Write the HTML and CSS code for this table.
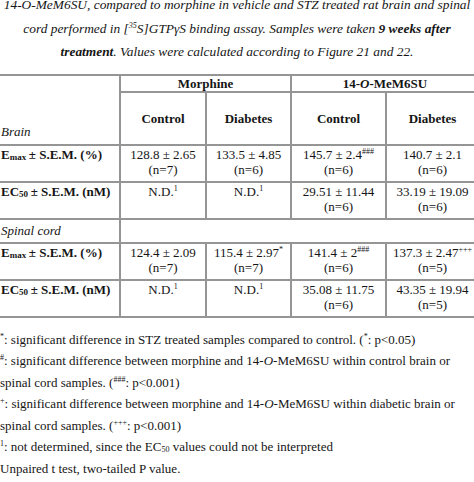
FILE: index.html
```html
<!DOCTYPE html>
<html>
<head>
<meta charset="utf-8">
<link rel="stylesheet" href="styles.css">
</head>
<body>
<p class="caption"><i>14-O-MeM6SU, compared to morphine in vehicle and STZ treated rat brain and spinal cord performed in [<sup>35</sup>S]GTP&gamma;S binding assay. Samples were taken <b>9 weeks after treatment</b>. Values were calculated according to Figure 21 and 22.</i></p>
<table class="data">
<colgroup>
<col class="c1"><col class="c2"><col class="c3"><col class="c4"><col class="c5">
</colgroup>
<tr class="h1">
<td class="region" rowspan="2"><i>Brain</i></td>
<th colspan="2">Morphine</th>
<th colspan="2">14-<i>O</i>-MeM6SU</th>
</tr>
<tr class="h2">
<th>Control</th><th>Diabetes</th><th>Control</th><th>Diabetes</th>
</tr>
<tr class="row">
<td class="lab">E<sub class="sm">max</sub>&thinsp;&plusmn; S.E.M. (%)</td>
<td>128.8 &plusmn; 2.65<br>(n=7)</td>
<td>133.5 &plusmn; 4.85<br>(n=6)</td>
<td>145.7 &plusmn; 2.4<sup>###</sup><br>(n=6)</td>
<td>140.7 &plusmn; 2.1<br>(n=6)</td>
</tr>
<tr class="row">
<td class="lab">EC<sub class="sm">50</sub>&thinsp;&plusmn; S.E.M. (nM)</td>
<td>N.D.<sup>1</sup></td>
<td>N.D.<sup>1</sup></td>
<td>29.51 &plusmn; 11.44<br>(n=6)</td>
<td>33.19 &plusmn; 19.09<br>(n=6)</td>
</tr>
<tr class="sec">
<td class="secname"><i>Spinal cord</i></td>
<td colspan="4"></td>
</tr>
<tr class="row">
<td class="lab">E<sub class="sm">max</sub>&thinsp;&plusmn; S.E.M. (%)</td>
<td>124.4 &plusmn; 2.09<br>(n=7)</td>
<td>115.4 &plusmn; 2.97<sup>*</sup><br>(n=7)</td>
<td>141.4 &plusmn; 2<sup>###</sup><br>(n=6)</td>
<td>137.3 &plusmn; 2.47<sup>+++</sup><br>(n=5)</td>
</tr>
<tr class="row">
<td class="lab">EC<sub class="sm">50</sub>&thinsp;&plusmn; S.E.M. (nM)</td>
<td>N.D.<sup>1</sup></td>
<td>N.D.<sup>1</sup></td>
<td>35.08 &plusmn; 11.75<br>(n=6)</td>
<td>43.35 &plusmn; 19.94<br>(n=5)</td>
</tr>
</table>
<div class="notes">
<p><sup>*</sup>: significant difference in STZ treated samples compared to control. (<sup>*</sup>: p&lt;0.05)</p>
<p><sup>#</sup>: significant difference between morphine and 14-<i>O</i>-MeM6SU within control brain or spinal cord samples. (<sup>###</sup>: p&lt;0.001)</p>
<p><sup>+</sup>: significant difference between morphine and 14-<i>O</i>-MeM6SU within diabetic brain or spinal cord samples. (<sup>+++</sup>: p&lt;0.001)</p>
<p><sup>1</sup>: not determined, since the EC<sub>50</sub> values could not be interpreted</p>
<p>Unpaired t test, two-tailed P value.</p>
</div>
</body>
</html>
```
FILE: styles.css
```css
html, body {
  margin: 0;
  padding: 0;
  background: #fff;
}
body {
  font-family: "Liberation Serif", "Times New Roman", serif;
  color: #151515;
  width: 474px;
  overflow: hidden;
}
sup {
  font-size: 8px;
  line-height: 0;
  vertical-align: 5px;
}
sub {
  font-size: 9px;
  line-height: 0;
  vertical-align: -1px;
}
.caption {
  margin: -7px 0 0 0;
  padding: 0;
  font-size: 13.4px;
  line-height: 23.5px;
  text-align: center;
}
.data {
  border-collapse: collapse;
  table-layout: fixed;
  width: 478px;
  margin-top: 10px;
  font-size: 13px;
  line-height: 15px;
}
.c1 { width: 120px; }
.c2 { width: 86px; }
.c3 { width: 85px; }
.c4 { width: 95px; }
.c5 { width: 92px; }
.data td, .data th {
  border: 2px solid #959595;
  padding: 0;
  text-align: center;
  vertical-align: top;
}
.data tr > :first-child {
  border-left: none;
}
.data tr > :last-child {
  border-right: none;
}
.data th {
  font-weight: bold;
  vertical-align: middle;
}
.h1 th { height: 14px; }
.h2 th { height: 51px; }
.data td.region {
  text-align: left;
  vertical-align: bottom;
  padding: 0 0 5px 1px;
  border-left: none;
}
.row td {
  height: 34px;
  padding-top: 1px;
}
.data td.lab {
  text-align: left;
  font-weight: bold;
  padding-left: 1px;
}
.sm {
  font-size: 9px;
}
.sec td {
  height: 22px;
  vertical-align: middle;
}
.data td.secname {
  text-align: left;
  padding-left: 1px;
}
.notes {
  margin-top: 11px;
  font-size: 13px;
  line-height: 21.5px;
}
.notes p {
  margin: 0;
}
.notes sub {
  font-size: 8px;
}
```
